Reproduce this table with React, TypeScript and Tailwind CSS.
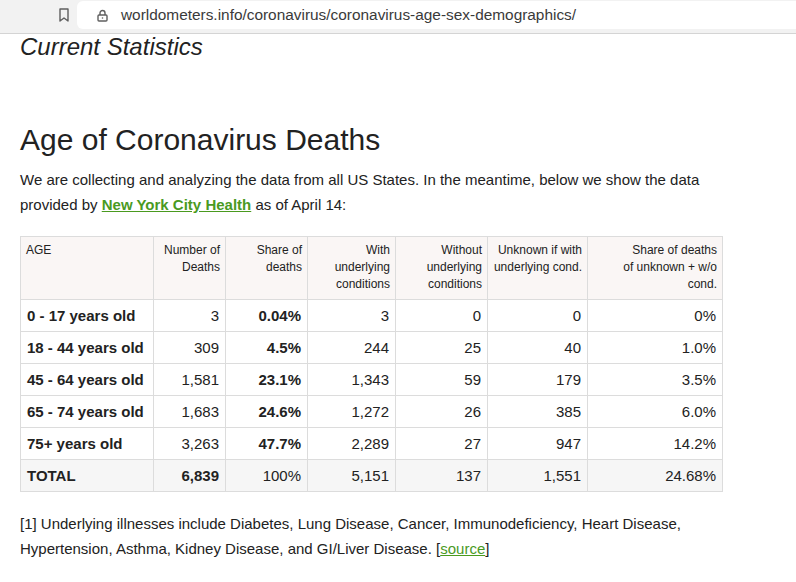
import React from "react";

const rows = [
  ["0 - 17 years old", "3", "0.04%", "3", "0", "0", "0%"],
  ["18 - 44 years old", "309", "4.5%", "244", "25", "40", "1.0%"],
  ["45 - 64 years old", "1,581", "23.1%", "1,343", "59", "179", "3.5%"],
  ["65 - 74 years old", "1,683", "24.6%", "1,272", "26", "385", "6.0%"],
  ["75+ years old", "3,263", "47.7%", "2,289", "27", "947", "14.2%"],
];

const widths = ["w-[133px]", "w-[72px]", "w-[82px]", "w-[88px]", "w-[92px]", "w-[100px]", "w-[135px]"];

export default function App() {
  return (
    <div className="w-[796px] h-[582px] overflow-hidden bg-white text-[#333] font-['Liberation_Sans',Arial,sans-serif]">
      {/* Browser bar */}
      <div className="h-[34px] bg-[#f2f2f2] border-b border-[#d4d4d4] flex items-start pt-[1px]">
        <div className="w-[77px] h-[28px] flex items-center justify-end pr-[8px]">
          <svg width="10" height="14" viewBox="0 0 10 14" fill="none" stroke="#5f5f5f" strokeWidth="1.4">
            <path d="M1 1h8v12l-4-3-4 3z" strokeLinejoin="round" />
          </svg>
        </div>
        <div className="flex-1 h-[28px] bg-white rounded-l-[6px] flex items-center pl-[20px]">
          <svg width="11" height="13" viewBox="0 0 11 13" fill="none" stroke="#5f5f5f" strokeWidth="1.4">
            <path d="M3 6V4a2.5 2.5 0 0 1 5 0v2" />
            <rect x="1" y="6" width="9" height="6" rx="1" />
            <circle cx="5.5" cy="9" r="0.8" fill="#5f5f5f" stroke="none" />
          </svg>
          <span className="ml-[13px] text-[15.4px] text-[#3a3a3a]">
            worldometers.info/coronavirus/coronavirus-age-sex-demographics/
          </span>
        </div>
      </div>

      <div className="pl-[20px]">
        <div className="italic text-[24px] leading-[28px] text-[#222] mt-[-1px]">Current Statistics</div>
        <h1 className="text-[30px] leading-[34px] text-[#222] mt-[62px]">Age of Coronavirus Deaths</h1>
        <p className="text-[15px] leading-[25px] mt-[10px] text-[#222]">
          We are collecting and analyzing the data from all US States. In the meantime, below we show the data
          <br />
          provided by{" "}
          <a className="font-bold text-[#4a9a1f] underline">New York City Health</a> as of April 14:
        </p>

        <table className="mt-[19px] border-collapse text-[#222] table-fixed w-[702px]">
          <thead>
            <tr className="bg-[#faf6f5]">
              {[
                ["AGE"],
                ["Number of", "Deaths"],
                ["Share of", "deaths"],
                ["With", "underlying", "conditions"],
                ["Without", "underlying", "conditions"],
                ["Unknown if with", "underlying cond."],
                ["Share of deaths", "of unknown + w/o", "cond."],
              ].map((lines, i) => (
                <th
                  key={i}
                  className={`${widths[i]} h-[63px] border border-[#dcdcdc] align-top font-normal text-[12px] leading-[17px] whitespace-nowrap px-[5px] pt-[5px] pb-[6px] ${
                    i === 0 ? "text-left" : "text-right"
                  }`}
                >
                  {lines.map((l, j) => (
                    <div key={j}>{l}</div>
                  ))}
                </th>
              ))}
            </tr>
          </thead>
          <tbody>
            {rows.map((r, i) => (
              <tr key={i}>
                {r.map((c, j) => (
                  <td
                    key={j}
                    className={`h-[32px] border border-[#dcdcdc] text-[15px] px-[6px] pt-[2px] ${
                      j === 0 ? "text-left font-bold" : "text-right"
                    } ${j === 2 ? "font-bold" : ""}`}
                  >
                    {c}
                  </td>
                ))}
              </tr>
            ))}
            <tr className="bg-[#f6f6f6]">
              {["TOTAL", "6,839", "100%", "5,151", "137", "1,551", "24.68%"].map((c, j) => (
                <td
                  key={j}
                  className={`h-[32px] border border-[#dcdcdc] text-[15px] px-[6px] pt-[2px] ${
                    j === 0 ? "text-left font-bold" : "text-right"
                  } ${j === 1 ? "font-bold" : ""}`}
                >
                  {c}
                </td>
              ))}
            </tr>
          </tbody>
        </table>

        <p className="text-[15px] leading-[25px] mt-[19px] text-[#222]">
          [1] Underlying illnesses include Diabetes, Lung Disease, Cancer, Immunodeficiency, Heart Disease,
          <br />
          Hypertension, Asthma, Kidney Disease, and GI/Liver Disease. [
          <a className="text-[#4a9a1f] underline">source</a>]
        </p>
      </div>
    </div>
  );
}
